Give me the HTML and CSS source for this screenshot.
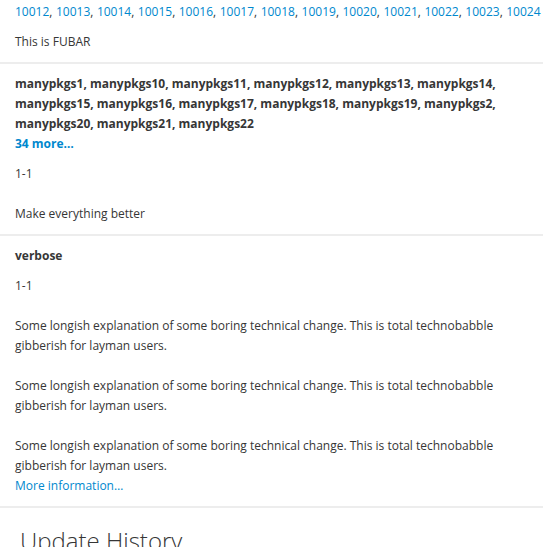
FILE: index.html
```html
<!DOCTYPE html>
<html>
<head>
<meta charset="utf-8">
<link rel="stylesheet" href="styles.css">
</head>
<body>
<div class="updates">
  <section class="update">
    <div class="bugs"><a href="#">10012</a>, <a href="#">10013</a>, <a href="#">10014</a>, <a href="#">10015</a>, <a href="#">10016</a>, <a href="#">10017</a>, <a href="#">10018</a>, <a href="#">10019</a>, <a href="#">10020</a>, <a href="#">10021</a>, <a href="#">10022</a>, <a href="#">10023</a>, <a href="#">10024</a></div>
    <div class="desc"><p>This is FUBAR</p></div>
  </section>
  <section class="update">
    <div class="pkgs"><strong>manypkgs1, manypkgs10, manypkgs11, manypkgs12, manypkgs13, manypkgs14, manypkgs15, manypkgs16, manypkgs17, manypkgs18, manypkgs19, manypkgs2, manypkgs20, manypkgs21, manypkgs22</strong><br><a href="#" class="more">34 more…</a></div>
    <div class="version">1-1</div>
    <div class="desc"><p>Make everything better</p></div>
  </section>
  <section class="update">
    <div class="pkgs"><strong>verbose</strong></div>
    <div class="version">1-1</div>
    <div class="desc">
      <p>Some longish explanation of some boring technical change. This is total technobabble gibberish for layman users.</p>
      <p>Some longish explanation of some boring technical change. This is total technobabble gibberish for layman users.</p>
      <p>Some longish explanation of some boring technical change. This is total technobabble gibberish for layman users.</p>
      <a href="#">More information…</a>
    </div>
  </section>
  <h2 class="history">Update History</h2>
</div>
</body>
</html>
```
FILE: styles.css
```css
html, body {
  margin: 0;
  padding: 0;
  background: #fff;
}
body {
  font-family: "Open Sans", "Liberation Sans", sans-serif;
  font-size: 12px;
  line-height: 20px;
  color: #363636;
  overflow: hidden;
}
a {
  color: #0088ce;
  text-decoration: none;
}
.update {
  display: flex;
  flex-direction: column;
  gap: 10px;
  padding: 2px 15px 10px;
  border-bottom: 2px solid #ededed;
}
.update + .update {
  padding-top: 10px;
}
.bugs {
  white-space: nowrap;
  word-spacing: 0.4px;
}
.pkgs strong {
  font-weight: 700;
}
.more {
  font-weight: 700;
}
.desc p {
  margin: 0;
}
.version + .desc {
  margin-top: 10px;
}
.desc p + p {
  margin-top: 20px;
}
.history {
  margin: 0;
  padding: 18px 20px 0;
  font-size: 24px;
  font-weight: 300;
  line-height: 30px;
  color: #363636;
}
```
